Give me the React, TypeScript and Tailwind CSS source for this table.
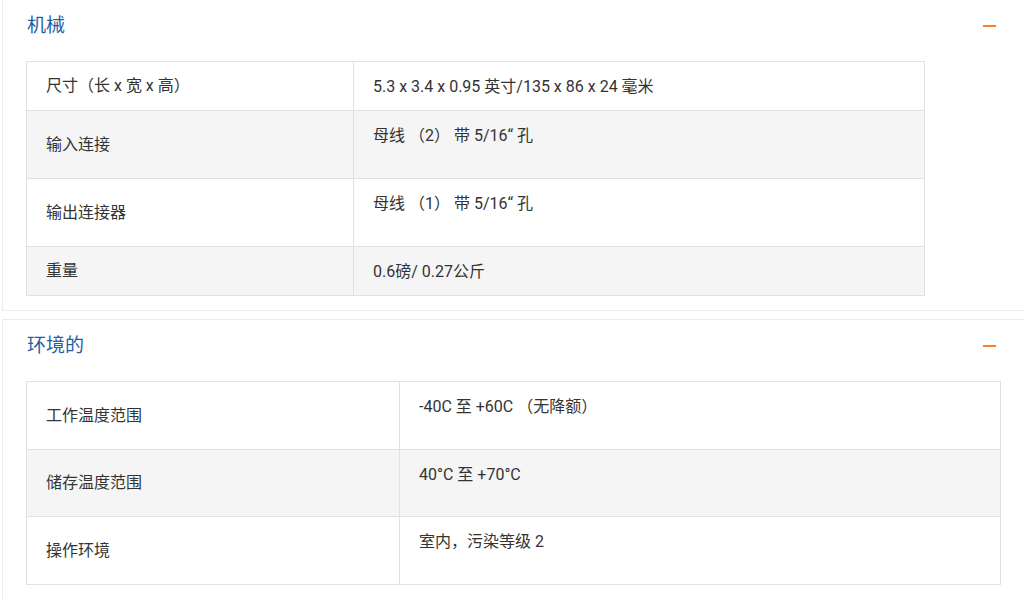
import React from "react";

type Row = { label: string; value: string; h: number };

const mech: Row[] = [
  { label: "尺寸（长 x 宽 x 高）", value: "5.3 x 3.4 x 0.95 英寸/135 x 86 x 24 毫米", h: 49 },
  { label: "输入连接", value: "母线 （2） 带 5/16“ 孔", h: 68 },
  { label: "输出连接器", value: "母线 （1） 带 5/16“ 孔", h: 68 },
  { label: "重量", value: "0.6磅/ 0.27公斤", h: 49 },
];

const env: Row[] = [
  { label: "工作温度范围", value: "-40C 至 +60C （无降额）", h: 68 },
  { label: "储存温度范围", value: "40°C 至 +70°C", h: 67 },
  { label: "操作环境", value: "室内，污染等级 2", h: 68 },
];

function Panel({
  title,
  rows,
  tableW,
  col1W,
  extra,
}: {
  title: string;
  rows: Row[];
  tableW: string;
  col1W: string;
  extra: string;
}) {
  return (
    <section className={`border border-r-0 border-[#ececec] bg-white ${extra}`}>
      <div className="flex h-[50px] items-center justify-between pl-[24px] pr-[28px]">
        <h2 className="mt-[3px] text-[19px] font-normal text-[#1f5fa3]">{title}</h2>
        <span className="mt-[1px] block h-[2px] w-[13px] bg-[#f5822a]" />
      </div>
      <table className={`ml-[23px] mt-[11px] border-collapse ${tableW}`}>
        <tbody>
          {rows.map((r, i) => (
            <tr key={i} className={i % 2 === 1 ? "bg-[#f5f5f5]" : "bg-white"} style={{ height: r.h }}>
              <td className={`border border-[#e1e1e1] px-[19px] align-middle leading-[24px] ${col1W}`}>
                {r.label}
              </td>
              <td className="border border-[#e1e1e1] px-[19px] pt-[13px] align-top leading-[24px]">
                {r.value}
              </td>
            </tr>
          ))}
        </tbody>
      </table>
    </section>
  );
}

export default function App() {
  return (
    <div
      className="min-h-[599px] w-[1024px] overflow-hidden bg-white pl-[2px] text-[16px] text-[#333]"
      style={{ fontFamily: '"Roboto", "Noto Sans CJK SC", sans-serif' }}
    >
      <Panel title="机械" rows={mech} tableW="w-[899px]" col1W="w-[327px]" extra="-mt-px h-[312px]" />
      <div className="h-[8px]" />
      <Panel title="环境的" rows={env} tableW="w-[975px]" col1W="w-[373px]" extra="h-[290px]" />
    </div>
  );
}
